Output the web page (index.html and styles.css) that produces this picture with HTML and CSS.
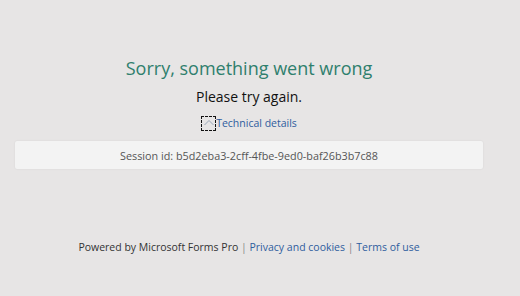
FILE: index.html
```html
<!DOCTYPE html>
<html>
<head>
<meta charset="utf-8">
<link rel="stylesheet" href="styles.css">
</head>
<body>
<div class="page">
  <main class="error">
    <h1 class="title">Sorry, something went wrong</h1>
    <p class="subtitle">Please try again.</p>
    <div class="details">
      <span class="toggle"><svg width="12" height="12" viewBox="0 0 12 12"><path d="M1.5 8 L6 3.5 L10.5 8" fill="none" stroke="#9aa7b8" stroke-width="1"/></svg></span><a class="link" href="#">Technical details</a>
    </div>
    <div class="session">Session id: b5d2eba3-2cff-4fbe-9ed0-baf26b3b7c88</div>
  </main>
  <footer class="footer">Powered by Microsoft Forms Pro <span class="sep">|</span> <a class="link" href="#">Privacy and cookies</a> <span class="sep">|</span> <a class="link" href="#">Terms of use</a></footer>
</div>
</body>
</html>
```
FILE: styles.css
```css
html, body {
  margin: 0;
  padding: 0;
  background: #e7e5e5;
  height: 100%;
}
body {
  font-family: "Open Sans", "Noto Sans", sans-serif;
  color: #222;
}
.page {
  width: 468px;
  margin-left: 15px;
  display: flex;
  flex-direction: column;
  align-items: center;
}
.error {
  width: 100%;
  display: flex;
  flex-direction: column;
  align-items: center;
  padding-top: 54px;
}
.title {
  margin: 0;
  font-size: 18px;
  font-weight: 400;
  color: #2f7f6d;
  line-height: 28px;
}
.subtitle {
  margin: 5px 0 0;
  font-size: 14px;
  line-height: 20px;
  color: #111;
}
.details {
  margin-top: 8px;
  display: flex;
  align-items: center;
  height: 16px;
}
.toggle {
  width: 13px;
  height: 13px;
  border: 1px dashed #111;
  display: inline-flex;
  align-items: center;
  justify-content: center;
}
.toggle svg { display: block; }
.link {
  color: #2f5d9e;
  text-decoration: none;
  font-size: 10.5px;
}
.session {
  margin-top: 10px;
  width: 100%;
  box-sizing: border-box;
  height: 28px;
  background: #f3f3f3;
  border-radius: 2px;
  box-shadow: 0 0 2px rgba(0,0,0,0.08);
  display: flex;
  align-items: center;
  justify-content: center;
  font-size: 10.8px;
  color: #555;
}
.footer {
  margin-top: 71px;
  font-size: 10.5px;
  color: #333;
}
.footer .link { font-size: 10.5px; }
.footer .sep { color: #888; }
```
